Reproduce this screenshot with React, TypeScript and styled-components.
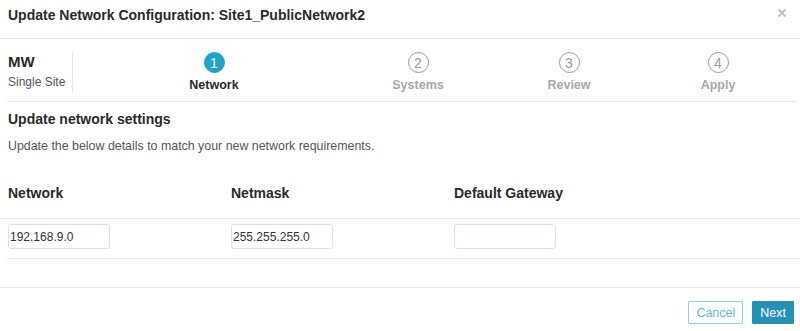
import styled, { createGlobalStyle } from "styled-components";

const GlobalStyle = createGlobalStyle`
  html, body {
    margin: 0;
    padding: 0;
    background: #fff;
  }
  body {
    font-family: "Liberation Sans", Arial, sans-serif;
    color: #333;
  }
`;

const Modal = styled.div`
  width: 800px;
  height: 331px;
  background: #fff;
  overflow: hidden;
`;

const Header = styled.header`
  height: 39px;
  box-sizing: border-box;
  border-bottom: 1px solid #e6e6e6;
  display: flex;
  align-items: flex-start;
  justify-content: space-between;
  padding: 6px 13px 0 8px;
`;

const Title = styled.h1`
  margin: 0;
  font-size: 14px;
  line-height: 18px;
  font-weight: 700;
  color: #2a2a2a;
`;

const Close = styled.button`
  border: 0;
  background: none;
  padding: 0;
  margin-top: 2px;
  width: 10px;
  height: 10px;
  cursor: pointer;
  display: flex;
`;

const StepBar = styled.div`
  margin: 0 3px 0 7px;
  height: 63px;
  box-sizing: border-box;
  border-bottom: 1px solid #e6e6e6;
  display: flex;
  align-items: flex-start;
`;

const Brand = styled.div`
  margin-top: 13px;
  width: 66px;
  height: 41px;
  box-sizing: border-box;
  border-right: 1px solid #e6e6e6;
  padding-left: 1px;
`;

const BrandName = styled.div`
  margin-top: 1px;
  font-size: 15px;
  line-height: 18px;
  font-weight: 700;
  color: #2a2a2a;
`;

const BrandSub = styled.div`
  margin-top: 3px;
  font-size: 12px;
  line-height: 16px;
  color: #555;
`;

const Steps = styled.ol`
  list-style: none;
  margin: 0;
  padding: 0;
  flex: 1;
  display: grid;
  grid-template-columns: 282px 126px 176px 122px;
`;

const Step = styled.li`
  margin-top: 13px;
  display: flex;
  flex-direction: column;
  align-items: center;
`;

const StepNum = styled.span<{ $active?: boolean }>`
  width: 21px;
  height: 21px;
  box-sizing: border-box;
  border-radius: 50%;
  display: flex;
  align-items: center;
  justify-content: center;
  font-size: 14px;
  background: ${(p) => (p.$active ? "#1ea3cd" : "#fff")};
  border: 1px solid ${(p) => (p.$active ? "#1ea3cd" : "#9a9a9a")};
  color: ${(p) => (p.$active ? "#fff" : "#9a9a9a")};
`;

const StepLabel = styled.span<{ $active?: boolean }>`
  margin-top: 4px;
  font-size: 12.5px;
  line-height: 16px;
  font-weight: 700;
  color: ${(p) => (p.$active ? "#2a2a2a" : "#a8a8a8")};
`;

const Section = styled.section`
  padding: 8px 8px 0;
`;

const SectionTitle = styled.h2`
  margin: 0;
  font-size: 14px;
  line-height: 18px;
  font-weight: 700;
  color: #2a2a2a;
`;

const SectionText = styled.p`
  margin: 10px 0 0;
  font-size: 12.4px;
  line-height: 16px;
  color: #555;
`;

const Row = styled.div<{ $head?: boolean }>`
  display: grid;
  grid-template-columns: 223px 223px 223px;
  border-bottom: 1px solid #e6e6e6;
  margin-left: ${(p) => (p.$head ? "0" : "7px")};
  padding-left: ${(p) => (p.$head ? "8px" : "1px")};
  padding-top: ${(p) => (p.$head ? "30px" : "5px")};
  padding-bottom: ${(p) => (p.$head ? "16px" : "9px")};
`;

const ColHead = styled.div`
  font-size: 14px;
  line-height: 18px;
  font-weight: 700;
  color: #2a2a2a;
`;

const Field = styled.input`
  width: 102px;
  height: 25px;
  box-sizing: border-box;
  border: 1px solid #dde2e5;
  border-radius: 3px;
  padding: 0 1px;
  font-family: inherit;
  font-size: 12px;
  color: #333;
  outline: none;
`;

const Footer = styled.footer`
  margin-top: 28px;
  border-top: 1px solid #e6e6e6;
  padding: 13px 6px 0 0;
  display: flex;
  justify-content: flex-end;
  gap: 9px;
`;

const Button = styled.button<{ $primary?: boolean }>`
  height: 23px;
  padding: 0 7px;
  min-width: ${(p) => (p.$primary ? "41px" : "54px")};
  font-family: "Liberation Sans", Arial, sans-serif;
  font-size: 12.5px;
  border-radius: 1px;
  cursor: pointer;
  border: 1px solid ${(p) => (p.$primary ? "#2591b6" : "#8fd0e6")};
  background: ${(p) => (p.$primary ? "#2591b6" : "#fff")};
  color: ${(p) => (p.$primary ? "#fff" : "#62b9d9")};
`;

const steps = ["Network", "Systems", "Review", "Apply"];

function App() {
  return (
    <Modal>
      <GlobalStyle />
      <Header>
        <Title>Update Network Configuration: Site1_PublicNetwork2</Title>
        <Close aria-label="Close">
          <svg width="10" height="10" viewBox="0 0 10 10">
            <path d="M1.5 1.5L8.5 8.5M8.5 1.5L1.5 8.5" stroke="#c4c4c4" strokeWidth="2" />
          </svg>
        </Close>
      </Header>
      <StepBar>
        <Brand>
          <BrandName>MW</BrandName>
          <BrandSub>Single Site</BrandSub>
        </Brand>
        <Steps>
          {steps.map((s, i) => (
            <Step key={s}>
              <StepNum $active={i === 0}>{i + 1}</StepNum>
              <StepLabel $active={i === 0}>{s}</StepLabel>
            </Step>
          ))}
        </Steps>
      </StepBar>
      <Section>
        <SectionTitle>Update network settings</SectionTitle>
        <SectionText>Update the below details to match your new network requirements.</SectionText>
      </Section>
      <Row $head>
        <ColHead>Network</ColHead>
        <ColHead>Netmask</ColHead>
        <ColHead>Default Gateway</ColHead>
      </Row>
      <Row>
        <Field defaultValue="192.168.9.0" />
        <Field defaultValue="255.255.255.0" />
        <Field defaultValue="" />
      </Row>
      <Footer>
        <Button>Cancel</Button>
        <Button $primary>Next</Button>
      </Footer>
    </Modal>
  );
}

export default App;
